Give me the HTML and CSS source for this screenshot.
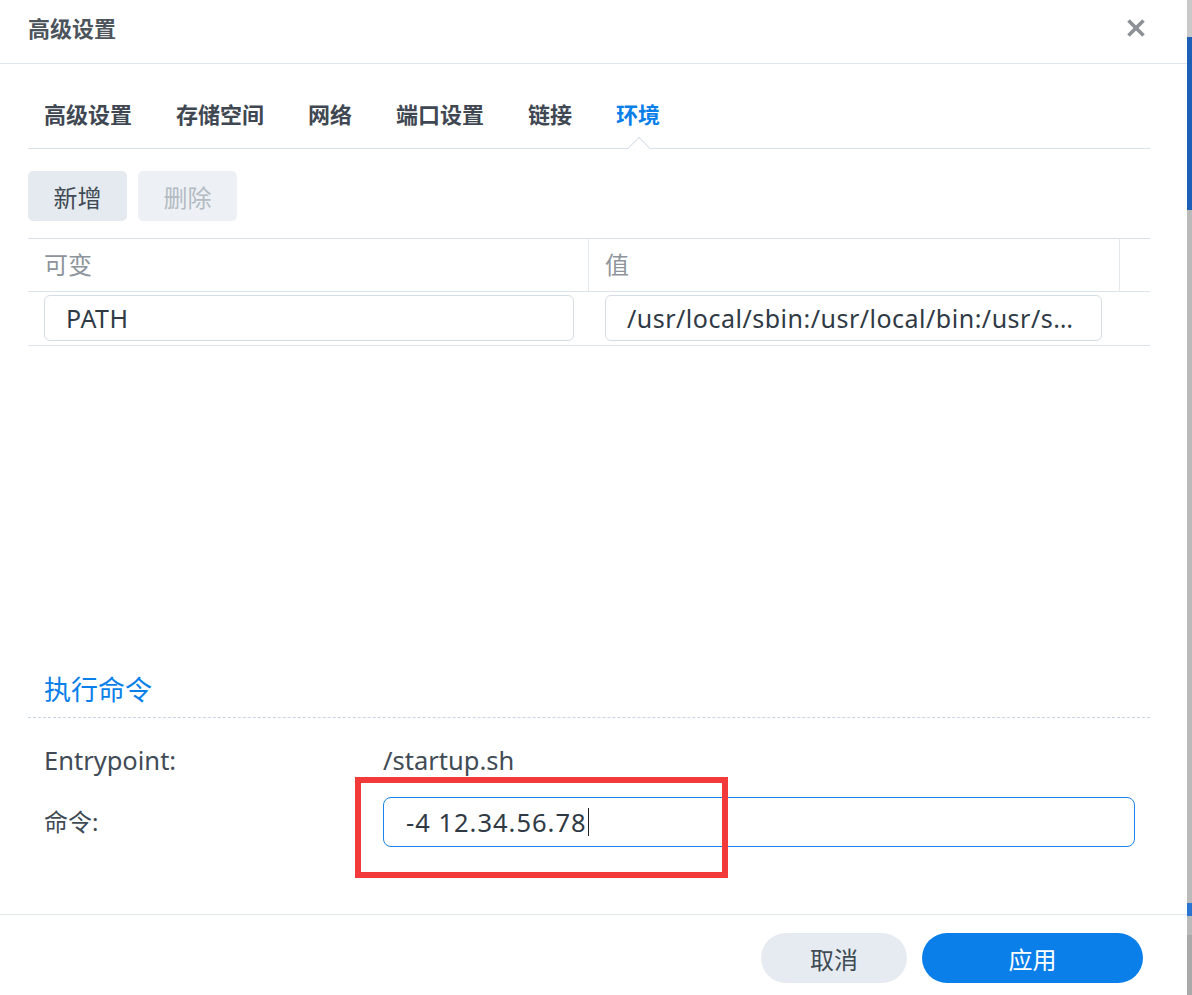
FILE: index.html
```html
<!DOCTYPE html>
<html lang="zh-CN">
<head>
<meta charset="utf-8">
<title>高级设置</title>
<link rel="stylesheet" href="styles.css">
</head>
<body>
<div class="dialog">
  <header class="dlg-header">
    <h1 class="dlg-title">高级设置</h1>
    <button class="close" aria-label="关闭">
      <svg width="20" height="20" viewBox="0 0 20 20"><path d="M2.5 2.5 L17.5 17.5 M17.5 2.5 L2.5 17.5" stroke="#8b9197" stroke-width="3.6" fill="none"/></svg>
    </button>
  </header>
  <main class="dlg-body">
    <nav class="tabs">
      <span class="tab">高级设置</span>
      <span class="tab">存储空间</span>
      <span class="tab">网络</span>
      <span class="tab">端口设置</span>
      <span class="tab">链接</span>
      <span class="tab active">环境</span>
    </nav>
    <div class="toolbar">
      <button class="btn">新增</button>
      <button class="btn disabled">删除</button>
    </div>
    <div class="grid">
      <div class="grid-head">
        <div class="cell c1">可变</div>
        <div class="cell c2">值</div>
        <div class="cell c3"></div>
      </div>
      <div class="grid-row">
        <div class="cell c1"><div class="field">PATH</div></div>
        <div class="cell c2"><div class="field ellipsis">/usr/local/sbin:/usr/local/bin:/usr/sbin:/usr/bin:/sbin:/bin</div></div>
        <div class="cell c3"></div>
      </div>
    </div>
    <section class="cmd">
      <h2 class="section-title">执行命令</h2>
      <div class="form-row">
        <span class="label">Entrypoint:</span>
        <span class="value">/startup.sh</span>
      </div>
      <div class="form-row input-row">
        <span class="label cjk">命令:</span>
        <div class="cmd-field">-4 12.34.56.78<span class="caret"></span></div>
      </div>
    </section>
  </main>
  <footer class="dlg-footer">
    <button class="pill cancel">取消</button>
    <button class="pill apply">应用</button>
  </footer>
  <div class="annotation"></div>
</div>
</body>
</html>
```

FILE: styles.css
```css
* { box-sizing: border-box; }

html, body {
  margin: 0;
  height: 100%;
}

body {
  font-family: "Noto Sans", "Noto Sans CJK SC", sans-serif;
  color: #414b55;
  background: linear-gradient(to bottom,
    #c9c9c9 0, #c9c9c9 37px,
    #1c5fb6 37px, #1c5fb6 210px,
    #bababa 210px, #bababa 903px,
    #2a74d2 903px, #2a74d2 916px,
    #bababa 916px, #bababa 935px,
    #a9a9a9 935px);
  overflow: hidden;
}

.dialog {
  position: relative;
  width: 1187px;
  height: 995px;
  background: #fff;
  display: flex;
  flex-direction: column;
}

/* header */
.dlg-header {
  height: 64px;
  flex: 0 0 64px;
  border-bottom: 1px solid #dfe5ec;
  display: flex;
  align-items: flex-start;
  justify-content: space-between;
  padding: 10px 41px 0 28px;
}

.dlg-title {
  margin: 0;
  font-size: 22px;
  line-height: 36px;
  font-weight: 700;
  color: #4c545c;
}

.close {
  border: 0;
  background: none;
  padding: 0;
  margin-top: 8px;
  width: 20px;
  height: 20px;
  display: block;
}
.close svg { display: block; }

/* body */
.dlg-body {
  flex: 1;
  display: flex;
  flex-direction: column;
  padding: 0 37px 0 28px;
}

.tabs {
  display: flex;
  gap: 44px;
  margin-top: 35px;
  padding-left: 16px;
  border-bottom: 1px solid #d9e1ea;
}

.tab {
  position: relative;
  font-size: 22px;
  line-height: 30px;
  font-weight: 700;
  color: #3f4852;
  padding-bottom: 19px;
}

.tab.active { color: #0a7fe9; }

.tab.active::after {
  content: "";
  position: absolute;
  left: calc(50% - 7.5px);
  bottom: -8px;
  width: 15px;
  height: 15px;
  background: #fff;
  border-left: 1px solid #d9e1ea;
  border-top: 1px solid #d9e1ea;
  transform: rotate(45deg);
}

.toolbar {
  display: flex;
  gap: 11px;
  margin-top: 22px;
}

.btn {
  width: 99px;
  height: 50px;
  border: 0;
  border-radius: 5px;
  background: #e5eaf0;
  font-family: inherit;
  font-size: 24px;
  color: #414b55;
  padding: 0;
}

.btn.disabled {
  background: #edf1f5;
  color: #b3bbc3;
}

/* grid */
.grid {
  margin-top: 17px;
  border-top: 1px solid #dae1e9;
}

.grid-head, .grid-row {
  display: flex;
}

.grid-head {
  height: 53px;
  border-bottom: 1px solid #dde4eb;
}

.grid-row {
  height: 54px;
  border-bottom: 1px solid #dde4eb;
}

.cell { min-width: 0; }
.cell.c1 { flex: 0 0 561px; }
.cell.c2 { flex: 0 0 531px; }
.cell.c3 { flex: 1; }

.grid-head .cell {
  font-size: 24px;
  line-height: 52px;
  color: #8d949b;
  padding-left: 16px;
}
.grid-head .c1, .grid-head .c2 { border-right: 1px solid #e4e9ee; }

.grid-row .c1 { padding: 3px 15px 0 16px; }
.grid-row .c2 { padding: 3px 18px 0 16px; }

.field {
  height: 46px;
  border: 1px solid #d4dce5;
  border-radius: 6px;
  padding: 0 14px 0 21px;
  font-size: 25px;
  letter-spacing: 0.5px;
  line-height: 44px;
  color: #2f3a45;
}

.field.ellipsis {
  white-space: nowrap;
  overflow: hidden;
  text-overflow: ellipsis;
}

/* command section */
.cmd {
  margin-top: 326px;
}

.section-title {
  margin: 0;
  font-size: 27px;
  line-height: 36px;
  font-weight: 400;
  color: #0a7fe9;
  padding: 0 0 9px 16px;
  border-bottom: 1px dashed #c7d4e1;
}

.form-row {
  display: flex;
  align-items: center;
  margin-top: 24px;
  font-size: 25.5px;
  line-height: 36px;
}

.form-row.input-row { margin-top: 19px; }

.label {
  flex: 0 0 339px;
  margin-left: 16px;
  color: #414b55;
}

.label.cjk {
  font-size: 24px;
}

.value { color: #414b55; }

.cmd-field {
  flex: 1;
  margin-right: 15px;
  height: 50px;
  border: 1.5px solid #1a82e8;
  border-radius: 8px;
  padding-left: 22px;
  display: flex;
  align-items: center;
  font-size: 25.5px;
  letter-spacing: 1px;
  color: #2f3a45;
}

.caret {
  display: inline-block;
  width: 1.5px;
  height: 28px;
  background: #222;
  margin-left: 1px;
}

/* footer */
.dlg-footer {
  flex: 0 0 81px;
  border-top: 1px solid #e1e6ec;
  display: flex;
  justify-content: flex-end;
  align-items: flex-start;
  gap: 15px;
  padding: 18px 44px 0 0;
}

.pill {
  height: 50px;
  border: 0;
  border-radius: 25px;
  font-family: inherit;
  font-size: 24px;
  padding: 0;
}

.pill.cancel {
  width: 146px;
  background: #e6ebf1;
  color: #414b55;
}

.pill.apply {
  width: 221px;
  background: #0a7fe9;
  color: #fff;
}

/* red annotation overlay */
.annotation {
  position: absolute;
  left: 355px;
  top: 777px;
  width: 373px;
  height: 101px;
  border: 6px solid #f23a3a;
}
```
